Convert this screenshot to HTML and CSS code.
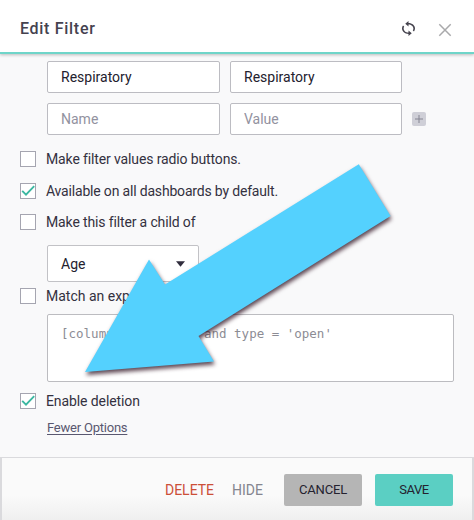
FILE: index.html
```html
<!DOCTYPE html>
<html lang="en">
<head>
  <meta charset="UTF-8">
  <meta name="viewport" content="width=device-width, initial-scale=1.0">
  <title>Edit Filter</title>
  <link rel="stylesheet" href="styles.css">
</head>
<body>

<div class="modal">
  <header class="modal-header">
    <h1>Edit Filter</h1>
    <div class="header-icons">
      <svg class="icon-refresh" viewBox="4 1 16 22" width="13" height="15" preserveAspectRatio="none">
        <path d="M12 4V1L8 5l4 4V6c3.31 0 6 2.69 6 6 0 1.01-.25 1.97-.7 2.8l1.46 1.46C19.54 15.03 20 13.57 20 12c0-4.42-3.58-8-8-8zm0 14c-3.31 0-6-2.69-6-6 0-1.01.25-1.97.7-2.8L5.24 7.74C4.46 8.97 4 10.43 4 12c0 4.42 3.58 8 8 8v3l4-4-4-4v3z"/>
      </svg>
      <svg class="icon-close" viewBox="0 0 14 14" width="14" height="14">
        <path d="M1.3 1.3L12.7 12.7M12.7 1.3L1.3 12.7"/>
      </svg>
    </div>
  </header>

  <main class="modal-body">
    <div class="pairs">
      <input class="field" type="text" value="Respiratory">
      <input class="field" type="text" value="Respiratory">
      <span></span>
      <input class="field" type="text" placeholder="Name">
      <input class="field" type="text" placeholder="Value">
      <button class="add">
        <svg viewBox="0 0 14 14" width="14" height="14"><path d="M7 3V11M3 7H11"/></svg>
      </button>
    </div>

    <div class="option option-radio">
      <span class="box"></span>
      <span>Make filter values radio buttons.</span>
    </div>
    <div class="option option-available">
      <span class="box"><svg viewBox="0 0 16 16" width="16" height="16"><path d="M2.2 7.8L6 11.6L14.2 3.2"/></svg></span>
      <span>Available on all dashboards by default.</span>
    </div>
    <div class="option option-child">
      <span class="box"></span>
      <span>Make this filter a child of</span>
    </div>

    <div class="select">
      <span>Age</span>
      <svg viewBox="0 0 9 6" width="9" height="6"><path d="M0 .3H9L4.5 5.7z"/></svg>
    </div>

    <div class="option option-match">
      <span class="box"></span>
      <span>Match an expression</span>
    </div>
    <div class="expression">[column] = 'value' and type = 'open'</div>

    <div class="option option-delete">
      <span class="box"><svg viewBox="0 0 16 16" width="16" height="16"><path d="M2.2 7.8L6 11.6L14.2 3.2"/></svg></span>
      <span>Enable deletion</span>
    </div>
    <a class="fewer">Fewer Options</a>
  </main>

  <footer class="modal-footer">
    <button class="link delete">DELETE</button>
    <button class="link hide">HIDE</button>
    <button class="btn cancel">CANCEL</button>
    <button class="btn save">SAVE</button>
  </footer>

  <!-- callout arrow over the form -->
  <svg class="arrow" viewBox="0 0 474 520" width="474" height="520">
    <path d="M85 372L149 259.5L165 284.5L358.8 164.3L390.6 216L198.5 336L214 361.5z"/>
  </svg>
</div>

</body>
</html>
```
FILE: styles.css
```css
* {
  box-sizing: border-box;
}

body {
  margin: 0;
  font-family: Roboto, "Liberation Sans", sans-serif;
  font-size: 14px;
  color: #34313f;
  background: #f9f9fa;
}

svg {
  display: block;
}

button {
  padding: 0;
  border: none;
  font-family: inherit;
}

.modal {
  position: relative;
  display: flex;
  flex-direction: column;
  height: 520px;
  overflow: hidden;
}

/* HEADER */
.modal-header {
  display: flex;
  align-items: center;
  justify-content: space-between;
  height: 54px;
  padding: 4px 22px 0 20px;
  background: #fff;
  border-bottom: 2px solid #6fd5c9;
  box-shadow: 0 1px 3px rgba(0, 0, 0, 0.25);
}

.modal-header h1 {
  margin: 0;
  font-size: 16px;
  font-weight: 500;
  letter-spacing: 0.7px;
  color: #45424f;
}

.header-icons {
  display: flex;
  align-items: center;
  gap: 23px;
}

.icon-refresh path {
  fill: #45434e;
}

.icon-close {
  margin-top: 3px;
}

.icon-close path {
  stroke: #a9a9ab;
  stroke-width: 1.5;
}

/* FORM */
.modal-body {
  display: flex;
  flex-direction: column;
  flex: 1;
  padding: 7px 20px 0;
}

.pairs {
  display: grid;
  grid-template-columns: 173px 172px 14px;
  gap: 10px;
  align-items: center;
  margin-left: 27px;
}

.field {
  width: 100%;
  height: 32px;
  padding: 0 13px;
  border: 1px solid #bcbcc2;
  border-radius: 2px;
  background: #fff;
  color: #23212e;
  font-family: inherit;
  font-size: 14px;
}

.field::placeholder {
  color: #9292a0;
}

.add {
  width: 14px;
  height: 14px;
  border-radius: 2px;
  background: #cfcfd7;
}

.add path {
  stroke: #858592;
}

.option {
  display: flex;
  align-items: center;
  gap: 10px;
  height: 16px;
  margin-bottom: 15.6px;
}

.option-radio {
  margin-top: 16px;
  letter-spacing: -0.13px;
}

.option-available {
  letter-spacing: -0.18px;
}

.option-child {
  letter-spacing: -0.14px;
}

.box {
  width: 16px;
  height: 16px;
  border: 1px solid #a5a5b0;
  background: #fff;
}

.box svg {
  margin: -1px;
}

.box path {
  fill: none;
  stroke: #3cb8a2;
  stroke-width: 1.9;
}

.select {
  display: flex;
  align-items: center;
  justify-content: space-between;
  width: 152px;
  height: 37px;
  margin: -1px 0 6px 27px;
  padding: 1px 13px 0;
  border: 1px solid #c2c2c6;
  border-radius: 2px;
  background: #fff;
  color: #23212e;
}

.select path {
  fill: #302d3d;
}

.option-match {
  margin-bottom: 10px;
}

.expression {
  width: 407px;
  height: 68px;
  margin-left: 27px;
  padding: 11px 13px;
  border: 1px solid #bcbcc0;
  border-radius: 2px;
  background: #fff;
  color: #8c8c94;
  font-family: "DejaVu Sans Mono", monospace;
  font-size: 12.5px;
}

.option-delete {
  margin: 11px 0 11px;
  letter-spacing: -0.1px;
}

.fewer {
  align-self: flex-start;
  margin-left: 27px;
  color: #5a5870;
  font-size: 13px;
  letter-spacing: -0.22px;
  text-decoration: underline;
  text-underline-offset: 2px;
}

/* FOOTER */
.modal-footer {
  display: flex;
  align-items: center;
  justify-content: flex-end;
  height: 63px;
  padding: 1px 19px 0 0;
  border: solid #dadadd;
  border-width: 1px 2px 0;
  background: linear-gradient(#fafafa 60%, #efefef);
}

.link {
  background: none;
  font-size: 14px;
}

.delete {
  margin-right: 18px;
  color: #cc4f38;
}

.hide {
  margin-right: 21px;
  color: #85858f;
}

.btn {
  width: 78px;
  height: 32px;
  border-radius: 2px;
  color: #24222f;
  font-size: 13px;
}

.cancel {
  margin-right: 13px;
  background: #b5b5b5;
  letter-spacing: -0.15px;
}

.save {
  background: #5bcfc3;
  letter-spacing: -0.4px;
}

/* ARROW */
.arrow {
  position: absolute;
  top: 0;
  left: 0;
  pointer-events: none;
  filter: drop-shadow(1px 3px 2px rgba(40, 10, 25, 0.75));
}

.arrow path {
  fill: #54d1fe;
}
```
